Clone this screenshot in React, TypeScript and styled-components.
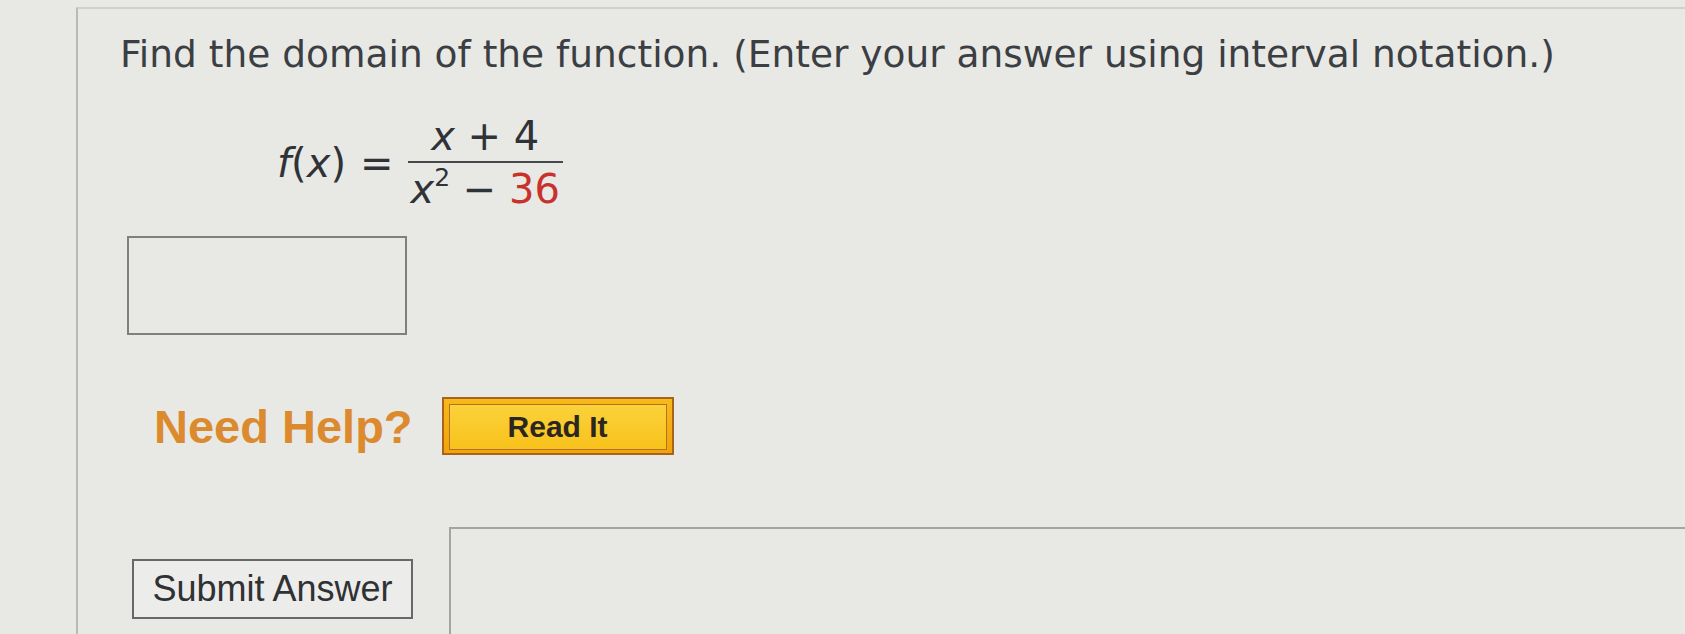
import React from 'react'
import styled, { createGlobalStyle } from 'styled-components'

const GlobalStyle = createGlobalStyle`
  html, body {
    margin: 0;
    padding: 0;
    height: 100%;
    overflow: hidden;
    background: #e8e8e5;
  }
`

const Page = styled.div`
  height: 634px;
  padding-top: 7px;
  box-sizing: border-box;
`

const Frame = styled.div`
  height: 100%;
  margin-left: 76px;
  border-top: 2px solid #d0d0cc;
  border-left: 2px solid #b9b9b5;
  display: flex;
  flex-direction: column;
  padding-left: 42px;
  box-sizing: border-box;
`

const Question = styled.p`
  margin: 24px 0 0;
  font-family: 'DejaVu Sans', Verdana, sans-serif;
  font-size: 37.5px;
  line-height: 42px;
  color: #3b3e42;
  white-space: nowrap;
`

const Formula = styled.div`
  display: flex;
  align-items: center;
  margin: 38px 0 0 157px;
  font-family: 'DejaVu Sans', Verdana, sans-serif;
  font-size: 40px;
  color: #2f3236;
  gap: 14px;
`

const Italic = styled.span`
  font-style: italic;
`

const Fraction = styled.span`
  display: inline-flex;
  flex-direction: column;
  align-items: center;
`

const Numer = styled.span`
  padding: 0 0 2px;
  line-height: 46px;
`

const Bar = styled.span`
  align-self: stretch;
  height: 2px;
  background: #46494c;
`

const Denom = styled.span`
  padding: 2px 3px 0;
  line-height: 48px;
`

const Sup = styled.sup`
  font-size: 25px;
  vertical-align: 17px;
  line-height: 0;
`

const Red = styled.span`
  color: #c8312c;
`

const AnswerBox = styled.div`
  width: 280px;
  height: 99px;
  margin: 23px 0 0 7px;
  border: 2px solid #7f7f7d;
  box-sizing: border-box;
`

const HelpRow = styled.div`
  display: flex;
  align-items: center;
  gap: 29px;
  margin: 62px 0 0 34px;
`

const HelpLabel = styled.span`
  font-family: 'Liberation Sans', Arial, sans-serif;
  font-weight: bold;
  font-size: 47px;
  color: #dc8a2e;
`

const ReadIt = styled.button`
  width: 232px;
  height: 58px;
  padding: 5px;
  border: 2px solid #a8641c;
  background: linear-gradient(#f7b91a, #f1a30c);
  box-sizing: border-box;
  cursor: pointer;
`

const ReadItInner = styled.span`
  display: flex;
  align-items: center;
  justify-content: center;
  height: 100%;
  border: 1px solid #b4711f;
  background: linear-gradient(#fbd23a, #f8c21c);
  font-family: 'Liberation Sans', Arial, sans-serif;
  font-weight: bold;
  font-size: 30px;
  color: #2b2620;
`

const BottomRow = styled.div`
  flex: 1;
  display: flex;
  margin-top: 72px;
  margin-left: 12px;
`

const Submit = styled.button`
  width: 281px;
  height: 60px;
  margin-top: 32px;
  border: 2px solid #66686a;
  background: #ececea;
  font-family: 'Liberation Sans', Arial, sans-serif;
  font-size: 36px;
  color: #2f3133;
  padding: 0;
  cursor: pointer;
`

const ResultBox = styled.div`
  flex: 1;
  margin-left: 36px;
  border-top: 2px solid #a4a4a0;
  border-left: 2px solid #a4a4a0;
`

export default function App() {
  return (
    <>
      <GlobalStyle />
      <Page>
        <Frame>
          <Question>
            Find the domain of the function. (Enter your answer using interval notation.)
          </Question>
          <Formula>
            <span>
              <Italic>f</Italic>(<Italic>x</Italic>)
            </span>
            <span>=</span>
            <Fraction>
              <Numer>
                <Italic>x</Italic> + 4
              </Numer>
              <Bar />
              <Denom>
                <Italic>x</Italic>
                <Sup>2</Sup> − <Red>36</Red>
              </Denom>
            </Fraction>
          </Formula>
          <AnswerBox />
          <HelpRow>
            <HelpLabel>Need Help?</HelpLabel>
            <ReadIt>
              <ReadItInner>Read It</ReadItInner>
            </ReadIt>
          </HelpRow>
          <BottomRow>
            <Submit>Submit Answer</Submit>
            <ResultBox />
          </BottomRow>
        </Frame>
      </Page>
    </>
  )
}
